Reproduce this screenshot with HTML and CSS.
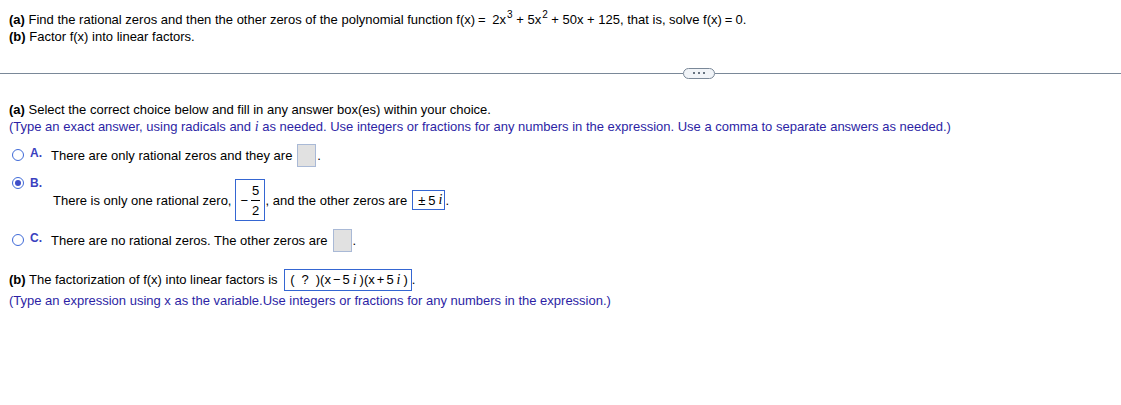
FILE: index.html
```html
<!DOCTYPE html>
<html>
<head>
<meta charset="utf-8">
<link rel="stylesheet" href="styles.css">
</head>
<body>
<div class="question">
  <div class="qline"><b>(a)</b> Find the rational zeros and then the other zeros of the polynomial function f(x)<span class="eq">=</span> 2x<sup>3</sup> + 5x<sup>2</sup> + 50x + 125, that is, solve f(x)<span class="eq">=</span>0.</div>
  <div class="qline"><b>(b)</b> Factor f(x) into linear factors.</div>
</div>

<div class="divider">
  <div class="rule rule-left"></div>
  <div class="pill"><span></span><span></span><span></span></div>
  <div class="rule rule-right"></div>
</div>

<div class="answer">
  <div class="line"><b>(a)</b> Select the correct choice below and fill in any answer box(es) within your choice.</div>
  <div class="hint">(Type an exact answer, using radicals and <i class="mi">i</i> as needed. Use integers or fractions for any numbers in the expression. Use a comma to separate answers as needed.)</div>

  <div class="choice choice-a">
    <span class="radio"></span><span class="letter">A.</span>
    <span class="ctext">There are only rational zeros and they are <span class="blank"></span>.</span>
  </div>

  <div class="choice choice-b">
    <div class="bhead"><span class="radio checked"></span><span class="letter">B.</span></div>
    <div class="btext">There is only one rational zero, <span class="box fracbox"><span class="minus">−</span><span class="frac"><span class="num">5</span><span class="den">2</span></span></span>, and the other zeros are <span class="box pmbox">±<span class="sp"></span>5<span class="sp"></span><i class="mi">i</i></span>.</div>
  </div>

  <div class="choice choice-c">
    <span class="radio"></span><span class="letter">C.</span>
    <span class="ctext">There are no rational zeros. The other zeros are <span class="blank"></span>.</span>
  </div>

  <div class="line partb"><b>(b)</b> The factorization of f(x) into linear factors is <span class="box factbox">(<span class="gap"></span>?<span class="gap"></span>)(x<span class="op">−</span>5<span class="sp"></span><i class="mi">i</i><span class="sp"></span>)(x<span class="op">+</span>5<span class="sp"></span><i class="mi">i</i><span class="sp"></span>)</span>.</div>
  <div class="hint hint-b">(Type an expression using x as the variable.Use integers or fractions for any numbers in the expression.)</div>
</div>
</body>
</html>
```

FILE: styles.css
```css
body {
  margin: 0;
  font-family: "Liberation Sans", Arial, sans-serif;
  font-size: 13px;
  color: #000;
  background: #fff;
}

.question {
  padding: 11px 9px 0 9px;
}

.qline {
  line-height: 17px;
}

.qline sup {
  font-size: 10px;
  line-height: 0;
  vertical-align: 6px;
  margin-left: 1px;
}

.eq {
  margin: 0 3px 0 3px;
}

.divider {
  display: flex;
  align-items: center;
  margin-top: 22px;
  height: 12px;
}

.rule {
  height: 0;
  border-top: 1px solid #7a8898;
}

.rule-left {
  width: 683px;
}

.rule-right {
  flex: 1;
}

.pill {
  width: 30px;
  height: 9px;
  border: 1px solid #7a8898;
  border-radius: 6px;
  background: #f1f4f8;
  display: flex;
  align-items: center;
  justify-content: center;
  gap: 3px;
}

.pill span {
  width: 2px;
  height: 2px;
  background: #3a4a5a;
  border-radius: 50%;
}

.answer {
  padding: 23px 9px 0 9px;
}

.line {
  line-height: 16px;
}

.hint {
  color: #2d1fa5;
  line-height: 17px;
}

.mi {
  font-family: "Liberation Serif", "Times New Roman", serif;
  font-style: italic;
  font-size: 14px;
}

.choice {
  display: flex;
  align-items: center;
}

.choice-a {
  margin-top: 9px;
  height: 22px;
}

.radio {
  width: 12px;
  height: 12px;
  border: 1.5px solid #3f6ad8;
  border-radius: 50%;
  margin-left: 3px;
  box-sizing: border-box;
  flex: none;
  display: inline-flex;
  align-items: center;
  justify-content: center;
}

.radio.checked::after {
  content: "";
  width: 6px;
  height: 6px;
  border-radius: 50%;
  background: #3f4fc8;
}

.letter {
  color: #3b3fbf;
  font-weight: bold;
  font-size: 12px;
  margin-left: 6px;
  width: 21px;
  align-self: flex-start;
  margin-top: 1px;
}

.choice-a .letter,
.choice-c .letter {
  margin-top: 2px;
}

.ctext {
  display: inline-flex;
  align-items: center;
}

.blank {
  display: inline-block;
  width: 17px;
  height: 21px;
  background: #e1e1e1;
  border: 1px solid #a9b9d6;
  margin-left: 5px;
  margin-right: 1px;
}

.choice-b {
  flex-direction: column;
  align-items: flex-start;
  margin-top: 10px;
}

.bhead {
  display: flex;
  align-items: center;
  height: 14px;
}

.bhead .letter {
  margin-top: 0;
}

.btext {
  display: flex;
  align-items: center;
  margin-left: 44px;
  margin-top: -11px;
}

.box {
  display: inline-flex;
  align-items: center;
  border: 1.5px solid #3566d2;
  box-sizing: border-box;
}

.fracbox {
  height: 42px;
  width: 30px;
  margin-left: 4px;
  padding-left: 4px;
}

.minus {
  margin-right: 3px;
}

.frac {
  display: inline-flex;
  flex-direction: column;
  align-items: center;
  line-height: 15px;
}

.num {
  border-bottom: 1px solid #000;
  padding: 0 1px 2px 1px;
}

.den {
  padding-top: 2px;
}

.pmbox {
  height: 20px;
  padding: 0 2px 0 5px;
  margin-left: 5px;
}

.sp {
  display: inline-block;
  width: 3px;
}

.gap {
  display: inline-block;
  width: 7px;
}

.choice-c {
  margin-top: 8px;
  height: 22px;
}

.partb {
  margin-top: 18px;
  display: flex;
  align-items: center;
  white-space: pre;
}

.factbox {
  height: 22px;
  padding: 0 3px 0 5px;
  margin-left: 3px;
  white-space: pre;
}

.op {
  margin: 0 2px;
}

.hint-b {
  margin-top: 1px;
}
```
